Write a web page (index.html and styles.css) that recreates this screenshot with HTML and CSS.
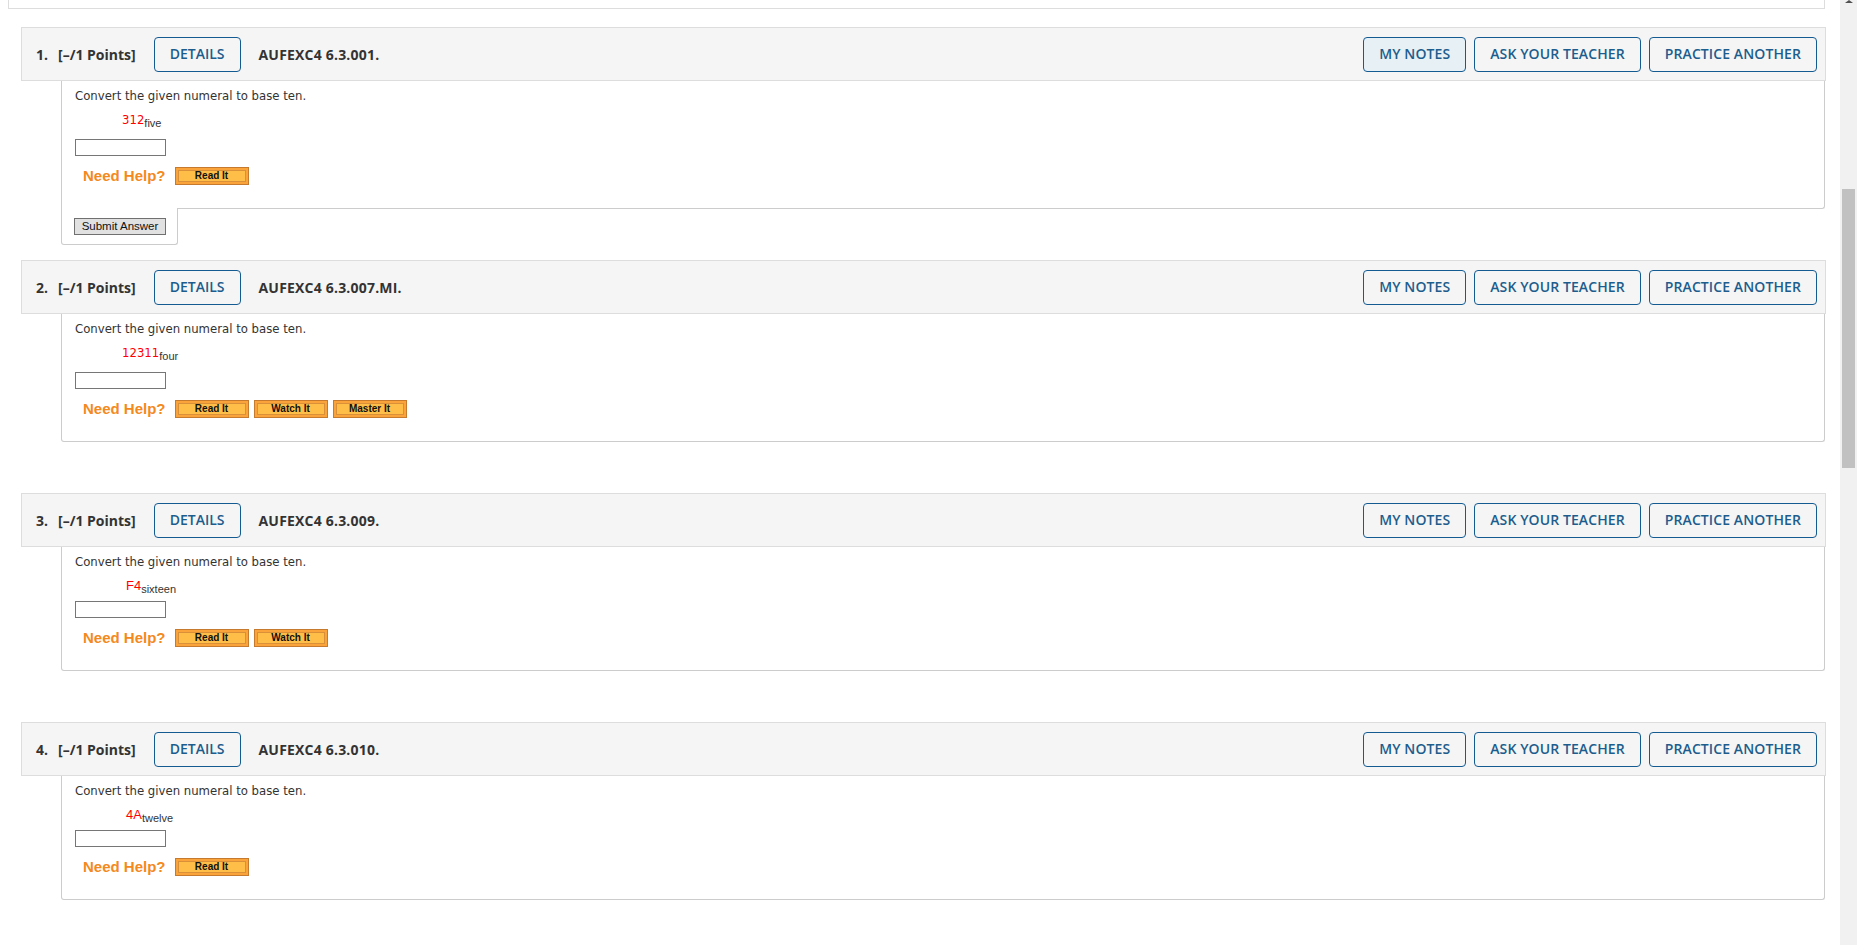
FILE: index.html
```html
<!DOCTYPE html>
<html lang="en">
<head>
<meta charset="utf-8">
<title>Assignment</title>
<link rel="stylesheet" href="styles.css">
</head>
<body>
<div class="page">
  <main class="main">
    <div class="topbox"></div>

    <section class="question">
      <div class="qhead">
        <span class="qnum">1.</span>
        <span class="qpts">[–/1 Points]</span>
        <button class="btn btn-details">DETAILS</button>
        <span class="qcode">AUFEXC4 6.3.001.</span>
        <div class="qactions">
          <button class="btn btn-active">MY NOTES</button>
          <button class="btn">ASK YOUR TEACHER</button>
          <button class="btn">PRACTICE ANOTHER</button>
        </div>
      </div>
      <div class="qbody qbody-tab">
        <p class="prompt">Convert the given numeral to base ten.</p>
        <div class="numeral numeral-tall"><span class="num">312</span><sub class="base">five</sub></div>
        <input class="answer" type="text">
        <div class="help">
          <span class="help-label">Need Help?</span>
          <button class="help-btn">Read It</button>
        </div>
      </div>
      <div class="submit-area submit-tab"><button class="submit">Submit Answer</button></div>
    </section>

    <section class="question">
      <div class="qhead">
        <span class="qnum">2.</span>
        <span class="qpts">[–/1 Points]</span>
        <button class="btn btn-details">DETAILS</button>
        <span class="qcode">AUFEXC4 6.3.007.MI.</span>
        <div class="qactions">
          <button class="btn">MY NOTES</button>
          <button class="btn">ASK YOUR TEACHER</button>
          <button class="btn">PRACTICE ANOTHER</button>
        </div>
      </div>
      <div class="qbody">
        <p class="prompt">Convert the given numeral to base ten.</p>
        <div class="numeral numeral-tall"><span class="num">12311</span><sub class="base">four</sub></div>
        <input class="answer" type="text">
        <div class="help">
          <span class="help-label">Need Help?</span>
          <button class="help-btn">Read It</button>
          <button class="help-btn">Watch It</button>
          <button class="help-btn">Master It</button>
        </div>
      </div>
      <div class="submit-area"></div>
    </section>

    <section class="question">
      <div class="qhead">
        <span class="qnum">3.</span>
        <span class="qpts">[–/1 Points]</span>
        <button class="btn btn-details">DETAILS</button>
        <span class="qcode">AUFEXC4 6.3.009.</span>
        <div class="qactions">
          <button class="btn">MY NOTES</button>
          <button class="btn">ASK YOUR TEACHER</button>
          <button class="btn">PRACTICE ANOTHER</button>
        </div>
      </div>
      <div class="qbody">
        <p class="prompt">Convert the given numeral to base ten.</p>
        <div class="numeral"><span class="num num-sans">F4</span><sub class="base">sixteen</sub></div>
        <input class="answer" type="text">
        <div class="help">
          <span class="help-label">Need Help?</span>
          <button class="help-btn">Read It</button>
          <button class="help-btn">Watch It</button>
        </div>
      </div>
      <div class="submit-area"></div>
    </section>

    <section class="question">
      <div class="qhead">
        <span class="qnum">4.</span>
        <span class="qpts">[–/1 Points]</span>
        <button class="btn btn-details">DETAILS</button>
        <span class="qcode">AUFEXC4 6.3.010.</span>
        <div class="qactions">
          <button class="btn">MY NOTES</button>
          <button class="btn">ASK YOUR TEACHER</button>
          <button class="btn">PRACTICE ANOTHER</button>
        </div>
      </div>
      <div class="qbody">
        <p class="prompt">Convert the given numeral to base ten.</p>
        <div class="numeral"><span class="num num-sans">4A</span><sub class="base">twelve</sub></div>
        <input class="answer" type="text">
        <div class="help">
          <span class="help-label">Need Help?</span>
          <button class="help-btn">Read It</button>
        </div>
      </div>
      <div class="submit-area"></div>
    </section>
  </main>

  <div class="scrollbar">
    <div class="sb-arrow"></div>
    <div class="sb-thumb"></div>
  </div>
</div>
</body>
</html>
```

FILE: styles.css
```css
html, body {
  margin: 0;
  padding: 0;
  height: 100%;
  overflow: hidden;
  background: #ffffff;
}

.page {
  display: flex;
  height: 945px;
}

.main {
  flex: 1;
  min-width: 0;
}

/* fake browser scrollbar */
.scrollbar {
  width: 17px;
  background: #f1f1f1;
  display: flex;
  flex-direction: column;
  align-items: center;
}

.sb-arrow {
  width: 0;
  height: 0;
  border-left: 4px solid transparent;
  border-right: 4px solid transparent;
  border-bottom: 3px solid #505050;
}

.sb-thumb {
  width: 13px;
  height: 279px;
  margin-top: 186px;
  background: #c1c1c1;
}

/* top card remnant */
.topbox {
  height: 9px;
  margin: 0 15px 0 8px;
  box-sizing: border-box;
  border: 1px solid #dddddd;
  border-top: none;
}

.question {
  margin-top: 18px;
}

.question + .question {
  margin-top: 15px;
}

.qhead {
  height: 54px;
  box-sizing: border-box;
  margin: 0 14px 0 21px;
  padding: 0 8px 0 14px;
  border: 1px solid #dddddd;
  background: #f5f5f5;
  display: flex;
  align-items: center;
  font-family: "Open Sans", "Liberation Sans", sans-serif;
  font-size: 14px;
  color: #333333;
}

.qnum {
  font-weight: 700;
  margin-right: 10px;
}

.qpts {
  font-weight: 700;
  margin-right: 18px;
}

.qcode {
  font-weight: 700;
  letter-spacing: 0.2px;
}

.btn {
  height: 35px;
  box-sizing: border-box;
  padding: 0 15px;
  border: 1px solid #135b91;
  border-radius: 4px;
  background: transparent;
  color: #1c5d8d;
  font-family: "Open Sans", "Liberation Sans", sans-serif;
  font-size: 14px;
  font-weight: 600;
  letter-spacing: 0.1px;
  line-height: 1;
  cursor: pointer;
}

.btn-details {
  margin-right: 18px;
  letter-spacing: 0;
}

.btn-active {
  background: #e7f0f5;
}

.qactions {
  margin-left: auto;
  display: flex;
  gap: 8px;
}

.qbody {
  margin: 0 15px 0 61px;
  padding: 7px 13px 23px;
  border: 1px solid #cccccc;
  border-top: none;
  border-radius: 0 0 3px 3px;
  font-family: "DejaVu Sans Condensed", "DejaVu Sans", sans-serif;
  font-size: 13px;
  line-height: 16px;
  color: #333333;
}

.qbody-tab {
  border-bottom-left-radius: 0;
}

.prompt {
  margin: 0;
}

.numeral {
  margin-top: 8px;
  padding-left: 47px;
  line-height: 16px;
  height: 16px;
}

.numeral-tall {
  padding-bottom: 4px;
}

.num {
  color: #ff0000;
}

.num-sans {
  font-family: "Liberation Sans", Arial, sans-serif;
  font-size: 13px;
  padding-left: 4px;
}

.base {
  font-family: "Liberation Sans", Arial, sans-serif;
  font-size: 11px;
  color: #333333;
  vertical-align: -3px;
  line-height: 0;
}

.answer {
  display: block;
  width: 91px;
  height: 17px;
  box-sizing: border-box;
  margin: 7px 0 0;
  padding: 0;
  border: 1px solid #767676;
  background: #ffffff;
}

.help {
  display: flex;
  align-items: center;
  height: 18px;
  margin-top: 11px;
}

.help-label {
  margin-left: 8px;
  margin-right: 9px;
  font-family: "Liberation Sans", Arial, sans-serif;
  font-weight: 700;
  font-size: 15px;
  color: #f4891e;
}

.help-btn {
  width: 74px;
  height: 18px;
  box-sizing: border-box;
  margin-right: 5px;
  padding: 0;
  border: 1px solid #c57a2e;
  background: #ffbe48;
  box-shadow: inset 0 0 0 2px #f9a33a, inset 0 0 0 3px #d99038;
  font-family: "Liberation Sans", Arial, sans-serif;
  font-weight: 700;
  font-size: 10px;
  line-height: 16px;
  color: #111111;
  cursor: pointer;
}

.submit-area {
  height: 36px;
}

.submit-tab {
  width: 117px;
  height: 37px;
  box-sizing: border-box;
  margin: -1px 0 0 61px;
  padding: 10px 0 0 12px;
  border: 1px solid #cccccc;
  border-top: none;
  border-radius: 0 0 3px 3px;
  background: #ffffff;
  position: relative;
}

.submit {
  display: block;
  width: 92px;
  height: 17px;
  box-sizing: border-box;
  padding: 0;
  border: 1px solid #707070;
  background: #e1e1e1;
  font-family: "Liberation Sans", Arial, sans-serif;
  font-size: 11.5px;
  line-height: 15px;
  color: #111111;
}
```
